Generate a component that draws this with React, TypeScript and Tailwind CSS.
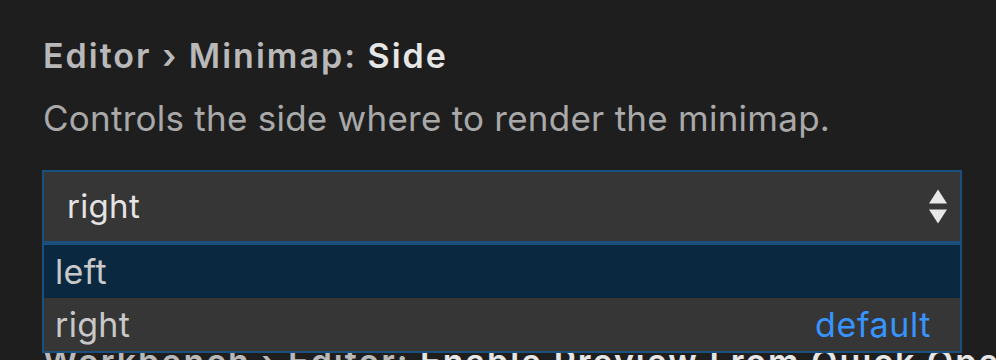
import React from "react";

export default function App() {
  const font = { fontFamily: "Inter, 'Noto Sans', sans-serif" };
  return (
    <div
      className="relative w-[996px] h-[360px] overflow-hidden bg-[#1e1e1e]"
      style={font}
    >
      <div className="flex flex-col pl-[42px] pr-[34px] pt-[32px]">
        <div className="text-[34px] leading-[48px] font-semibold tracking-[2px] pl-[1px] text-[#b9b9b9] whitespace-nowrap">
          Editor › Minimap: <span className="text-[#e6e6e6]">Side</span>
        </div>
        <div className="mt-[14px] text-[35px] leading-[48px] tracking-[0.25px] pl-[1px] text-[#a9a9a9] whitespace-nowrap">
          Controls the side where to render the minimap.
        </div>
        <div className="mt-[28px] h-[73px] w-[920px] border-2 border-[#1b4f7e] bg-[#363636] flex items-center justify-between pl-[23px] pr-[12px]">
          <span className="text-[33px] tracking-[0.3px] text-[#e4e4e4]">right</span>
          <svg width="20" height="36" viewBox="0 0 20 36">
            <polygon points="10,0.5 19,14.5 1,14.5" fill="#e8e8e8" />
            <polygon points="1,20.5 19,20.5 10,34.5" fill="#e8e8e8" />
          </svg>
        </div>
        <div className="mt-[95px] text-[34px] leading-[48px] font-semibold tracking-[2px] pl-[1px] text-[#b9b9b9] whitespace-nowrap">
          Workbench › Editor: <span className="text-[#e6e6e6]">Enable Preview From Quick Open</span>
        </div>
      </div>
      <div className="absolute left-[42px] top-[243px] w-[920px] h-[110px] border-2 border-[#1b4f7e] flex flex-col">
        <div className="h-[53px] bg-[#0a2840] flex items-center pl-[11px]">
          <span className="text-[34px] tracking-[0.3px] text-[#c8c8c8]">left</span>
        </div>
        <div className="flex-1 bg-[#363636] flex items-center justify-between pl-[11px] pr-[29px]">
          <span className="text-[34px] tracking-[0.3px] text-[#c8c8c8]">right</span>
          <span className="text-[34px] tracking-[0.6px] text-[#3794ff]">default</span>
        </div>
      </div>
    </div>
  );
}
